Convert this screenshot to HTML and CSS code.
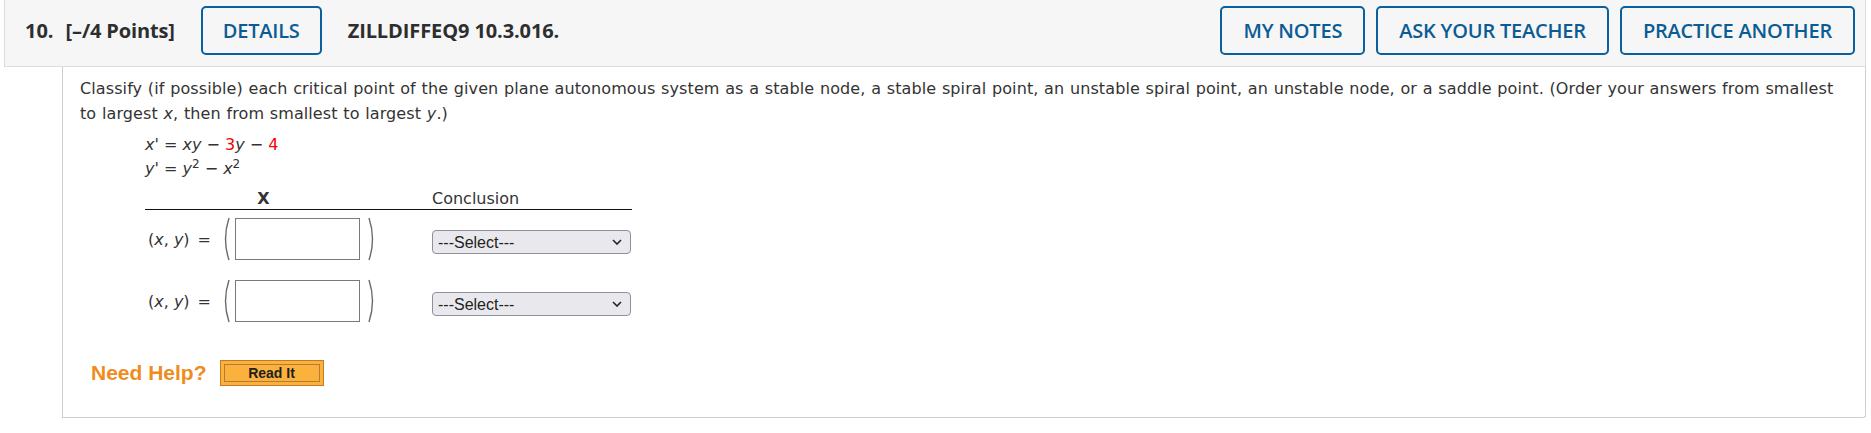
FILE: index.html
```html
<!DOCTYPE html>
<html>
<head>
<meta charset="utf-8">
<link rel="stylesheet" href="styles.css">
</head>
<body>
<div class="page">
  <div class="qhead">
    <div class="qleft">
      <span class="qnum">10.</span>
      <span class="qpts">[–/4 Points]</span>
      <button class="hbtn details">DETAILS</button>
      <span class="qcode">ZILLDIFFEQ9 10.3.016.</span>
    </div>
    <div class="qright">
      <button class="hbtn">MY NOTES</button>
      <button class="hbtn">ASK YOUR TEACHER</button>
      <button class="hbtn">PRACTICE ANOTHER</button>
    </div>
  </div>
  <div class="qbody">
    <p class="prompt">Classify (if possible) each critical point of the given plane autonomous system as a stable node, a stable spiral point, an unstable spiral point, an unstable node, or a saddle point. (Order your answers from smallest<br>to largest <i>x</i>, then from smallest to largest <i>y</i>.)</p>
    <div class="eqs">
      <div class="eq"><i>x'</i> = <i>xy</i> − <span class="red">3</span><i>y</i> − <span class="red">4</span></div>
      <div class="eq"><i>y'</i> = <i>y</i><sup>2</sup> − <i>x</i><sup>2</sup></div>
    </div>
    <div class="tbl">
      <div class="th thx">X</div>
      <div class="th thc">Conclusion</div>
      <div class="cell pt">
        <span class="lbl">(<i>x</i>, <i>y</i>)</span><span class="eqsign">=</span>
        <svg class="paren pl" width="10" height="44" viewBox="0 0 10 44"><path d="M8 1 Q1 22 8 43" fill="none" stroke="#6b6b6b" stroke-width="1.4"/></svg>
        <input class="ans" type="text">
        <svg class="paren pr" width="10" height="44" viewBox="0 0 10 44"><path d="M2 1 Q9 22 2 43" fill="none" stroke="#6b6b6b" stroke-width="1.4"/></svg>
      </div>
      <div class="cell sel">
        <div class="selwrap">
          <select class="pick"><option>---Select---</option></select>
          <svg class="chev" width="10" height="6" viewBox="0 0 10 6"><path d="M1 1 L5 5 L9 1" fill="none" stroke="#222" stroke-width="1.6"/></svg>
        </div>
      </div>
      <div class="cell pt">
        <span class="lbl">(<i>x</i>, <i>y</i>)</span><span class="eqsign">=</span>
        <svg class="paren pl" width="10" height="44" viewBox="0 0 10 44"><path d="M8 1 Q1 22 8 43" fill="none" stroke="#6b6b6b" stroke-width="1.4"/></svg>
        <input class="ans" type="text">
        <svg class="paren pr" width="10" height="44" viewBox="0 0 10 44"><path d="M2 1 Q9 22 2 43" fill="none" stroke="#6b6b6b" stroke-width="1.4"/></svg>
      </div>
      <div class="cell sel">
        <div class="selwrap">
          <select class="pick"><option>---Select---</option></select>
          <svg class="chev" width="10" height="6" viewBox="0 0 10 6"><path d="M1 1 L5 5 L9 1" fill="none" stroke="#222" stroke-width="1.6"/></svg>
        </div>
      </div>
    </div>
    <div class="help">
      <span class="needhelp">Need Help?</span>
      <button class="readit"><span>Read It</span></button>
    </div>
  </div>
</div>
</body>
</html>
```
FILE: styles.css
```css
* { box-sizing: border-box; }
html, body { margin: 0; padding: 0; background: #fff; }
body { font-family: "DejaVu Sans", Verdana, sans-serif; color: #333; }

.page { padding-left: 4px; width: 1866px; }

.qhead {
  display: flex;
  justify-content: space-between;
  align-items: flex-start;
  height: 67px;
  padding: 6px 10px 0 20px;
  background: #f6f6f6;
  border: 1px solid #dcdcdc;
  border-top: none;
  font-family: "Open Sans", "Noto Sans", sans-serif;
  font-weight: 600;
  font-size: 20px;
  color: #2e2e2e;
}
.qleft, .qright { display: flex; align-items: center; height: 49px; }
.qnum { font-weight: 700; margin-right: 12px; }
.qpts { font-weight: 700; margin-right: 26px; letter-spacing: -0.15px; }
.qcode { font-weight: 700; margin-left: 26px; letter-spacing: -0.1px; }
.qright { gap: 11px; }

.hbtn {
  height: 49px;
  padding: 0 21px;
  border: 2px solid #0a609c;
  border-radius: 5px;
  background: #f6f6f6;
  color: #0b5c94;
  font-family: "Open Sans", "Noto Sans", sans-serif;
  font-weight: 600;
  font-size: 20px;
  letter-spacing: -0.2px;
}
.hbtn.details { padding: 0 20px; }

.qbody {
  margin-left: 58px;
  border: 1px solid #cfcfcf;
  border-top: none;
  border-radius: 0 0 3px 0;
  padding: 9px 18px 33px 17px;
  height: 351px;
}

.prompt {
  margin: 0;
  font-size: 16px;
  line-height: 25px;
  letter-spacing: 0.1px;
  word-spacing: 0.5px;
  white-space: nowrap;
}

.eqs { margin: 7px 0 0 65px; font-size: 16px; line-height: 24px; }
.eq sup { font-size: 12px; line-height: 0; vertical-align: 6px; }
.red { color: #f40000; }

.tbl {
  display: grid;
  grid-template-columns: 237px 50px 200px;
  margin: 8px 0 0 65px;
  width: 487px;
}
.th {
  font-size: 16px;
  line-height: 20px;
  border-bottom: 1px solid #111;
  height: 21px;
}
.thx { font-weight: 700; text-align: center; grid-column: 1 / 3; padding-right: 50px; color: #333; }
.thc { grid-column: 3; }

.cell { height: 62px; display: flex; align-items: center; }
.pt { grid-column: 1 / 3; padding-left: 3px; margin-top: -2px; }
.sel { grid-column: 3; }

.lbl { font-size: 16px; }
.eqsign { font-size: 16px; margin-left: 8px; }
.paren { display: block; }
.paren.pl { margin-left: 10px; }
.ans {
  width: 125px;
  height: 42px;
  margin: 0 3px 0 4px;
  border: 1px solid #7a7a7a;
  background: #fff;
}
.paren.pr { margin-left: 4px; }

.selwrap { position: relative; width: 199px; height: 24px; margin-top: 2px; }
.pick {
  appearance: none;
  -webkit-appearance: none;
  width: 199px;
  height: 24px;
  padding: 0 0 0 5px;
  border: 1px solid #8f8f9d;
  border-radius: 4px;
  background: #e9e9ed;
  color: #222;
  font-family: "Liberation Sans", Arial, sans-serif;
  font-size: 16px;
}
.chev { position: absolute; right: 9px; top: 9px; }

.help {
  display: flex;
  align-items: center;
  margin: 26px 0 0 11px;
  gap: 13px;
}
.needhelp {
  font-family: "Liberation Sans", Arial, sans-serif;
  font-weight: 700;
  font-size: 21px;
  color: #f08c1e;
}
.readit {
  width: 104px;
  height: 26px;
  padding: 3px;
  border: 1px solid #c37a22;
  background: #fbb23c;
  display: flex;
}
.readit span {
  flex: 1;
  border: 1px solid #b87a3a;
  display: flex;
  align-items: center;
  justify-content: center;
  font-family: "Liberation Sans", Arial, sans-serif;
  font-weight: 700;
  font-size: 14px;
  color: #1e1e1e;
}
```
